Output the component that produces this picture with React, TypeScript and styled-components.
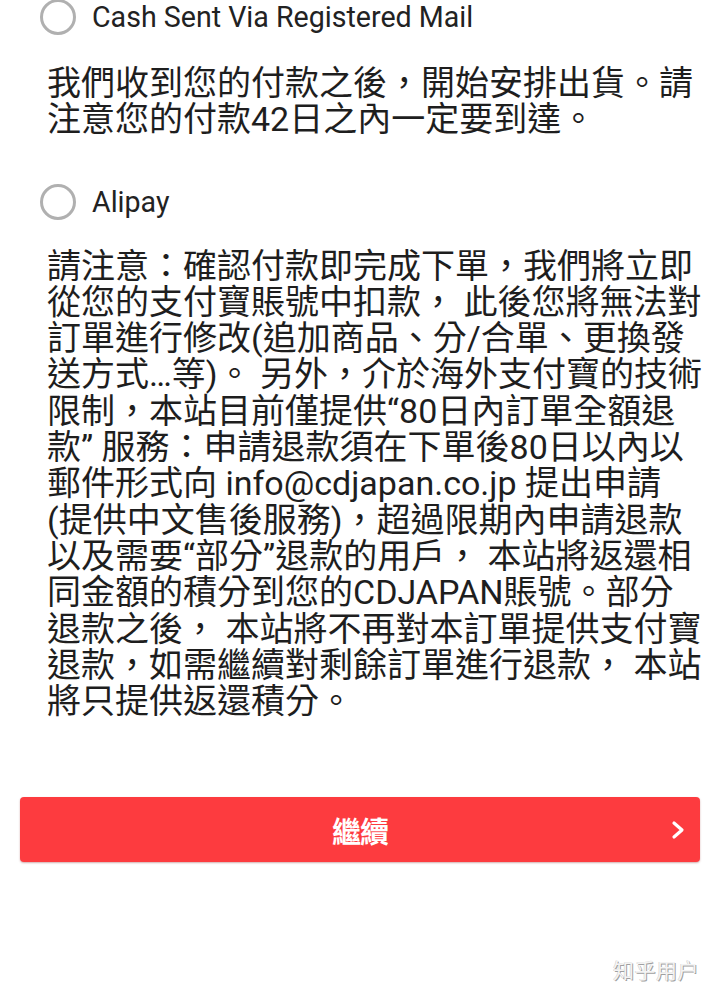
import React from "react";
import styled, { createGlobalStyle } from "styled-components";

const Global = createGlobalStyle`
  html, body { margin: 0; padding: 0; background: #ffffff; }
  body { font-family: Roboto, "Noto Sans CJK TC", sans-serif; }
  * { box-sizing: border-box; }
`;

const Page = styled.div`
  position: relative;
  width: 720px;
  height: 993px;
  overflow: hidden;
  display: flex;
  flex-direction: column;
  background: #ffffff;
`;

const Option = styled.label<{ $top: number }>`
  display: flex;
  align-items: center;
  gap: 16px;
  margin-top: ${(p) => p.$top}px;
  padding-left: 40px;
  height: 36px;
`;

const Radio = styled.span`
  display: block;
  flex: none;
  width: 36px;
  height: 36px;
  border: 3px solid #b0b0b0;
  border-radius: 50%;
  background: #fff;
`;

const OptionLabel = styled.span`
  font-family: Roboto, "Noto Sans CJK TC", sans-serif;
  font-size: 28.6px;
  color: #222222;
  line-height: 36px;
`;

const Note = styled.p<{ $top: number }>`
  margin: ${(p) => p.$top}px 0 0 0;
  padding-left: 47px;
  font-family: Roboto, "Noto Sans CJK TC", sans-serif;
  font-size: 34px;
  line-height: 36.3px;
  color: #1e1e1e;
  white-space: pre;
`;

const ContinueButton = styled.button`
  margin: 78px 0 0 20px;
  width: 680px;
  height: 65px;
  border: none;
  border-radius: 4px;
  background: #fd3b3f;
  box-shadow: 0 1px 2px rgba(120, 20, 20, 0.35);
  display: grid;
  grid-template-columns: 1fr auto 1fr;
  align-items: center;
  padding: 0 15px;
  cursor: pointer;
`;

const ButtonText = styled.span`
  grid-column: 2;
  font-family: "Noto Sans CJK TC", sans-serif;
  font-weight: 700;
  font-size: 29px;
  color: #ffffff;
  letter-spacing: -1px;
`;

const Chevron = styled.svg`
  grid-column: 3;
  justify-self: end;
`;

const Watermark = styled.div`
  position: absolute;
  right: 21px;
  top: 954px;
  font-family: "Noto Sans CJK SC", sans-serif;
  font-size: 21px;
  color: #f4f4f4;
  letter-spacing: 0.5px;
  text-shadow: 1px 1px 0 #a0a0a0, -0.5px -0.5px 0 #cccccc;
`;

const p1 = "我們收到您的付款之後，開始安排出貨。請\n注意您的付款42日之內一定要到達。";

const p2 = [
  "請注意：確認付款即完成下單，我們將立即",
  "從您的支付寶賬號中扣款， 此後您將無法對",
  "訂單進行修改(追加商品、分/合單、更換發",
  "送方式…等)。 另外，介於海外支付寶的技術",
  "限制，本站目前僅提供“80日內訂單全額退",
  "款” 服務：申請退款須在下單後80日以內以",
  "郵件形式向 info@cdjapan.co.jp 提出申請",
  "(提供中文售後服務)，超過限期內申請退款",
  "以及需要“部分”退款的用戶， 本站將返還相",
  "同金額的積分到您的CDJAPAN賬號。部分",
  "退款之後， 本站將不再對本訂單提供支付寶",
  "退款，如需繼續對剩餘訂單進行退款， 本站",
  "將只提供返還積分。",
].join("\n");

export default function App() {
  return (
    <>
      <Global />
      <Page>
        <Option $top={-1}>
          <Radio />
          <OptionLabel>Cash Sent Via Registered Mail</OptionLabel>
        </Option>
        <Note $top={30}>{p1}</Note>
        <Option $top={46}>
          <Radio />
          <OptionLabel>Alipay</OptionLabel>
        </Option>
        <Note $top={28}>{p2}</Note>
        <ContinueButton>
          <ButtonText>繼續</ButtonText>
          <Chevron width="14" height="20" viewBox="0 0 14 20">
            <polyline
              points="3,3 11,10 3,17"
              fill="none"
              stroke="#ffffff"
              strokeWidth="3.2"
              strokeLinecap="round"
              strokeLinejoin="round"
            />
          </Chevron>
        </ContinueButton>
        <Watermark>知乎用户</Watermark>
      </Page>
    </>
  );
}
